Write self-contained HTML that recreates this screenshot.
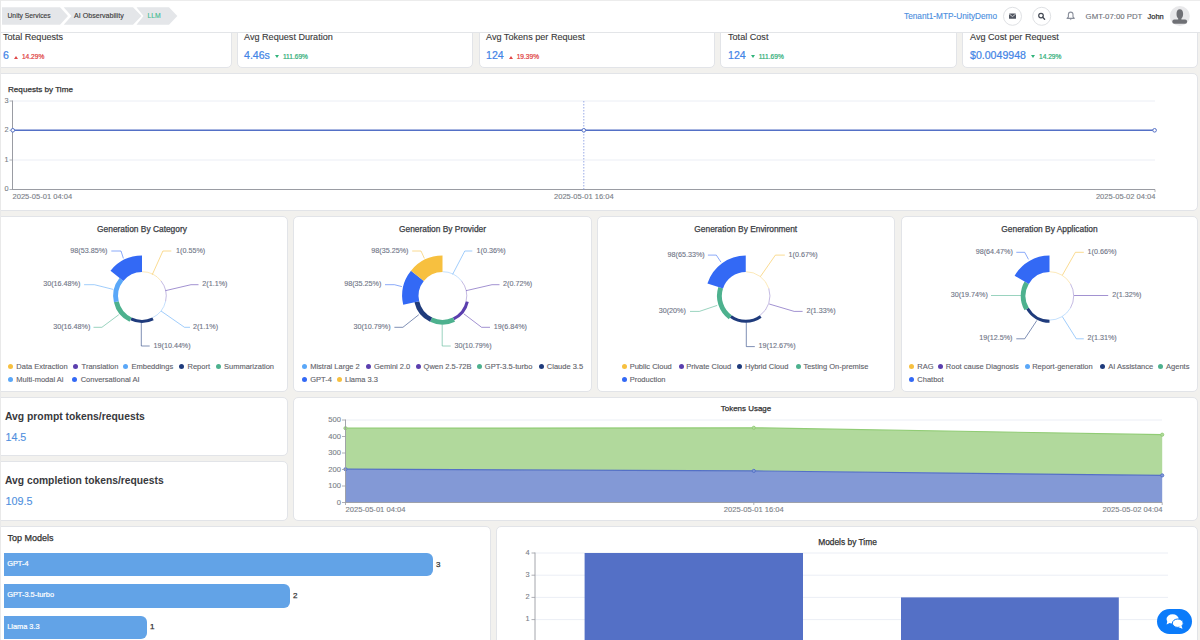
<!DOCTYPE html>
<html><head><meta charset="utf-8"><style>
html,body{margin:0;padding:0;}
body{width:1200px;height:640px;overflow:hidden;position:relative;background:#f2f1ee;font-family:"Liberation Sans", sans-serif;}
.card{position:absolute;box-sizing:border-box;background:#fff;border:1px solid #e2e4e8;}
.t{position:absolute;white-space:nowrap;-webkit-text-stroke-width:0.12px;}
svg{position:absolute;left:0;top:0;overflow:visible}
</style></head><body>
<div class="card" style="left:-4px;top:20px;width:236px;height:48px;border-radius:5px"></div><div class="card" style="left:237px;top:20px;width:236px;height:48px;border-radius:5px"></div><div class="card" style="left:479px;top:20px;width:236px;height:48px;border-radius:5px"></div><div class="card" style="left:720px;top:20px;width:237px;height:48px;border-radius:5px"></div><div class="card" style="left:962px;top:20px;width:236px;height:48px;border-radius:5px"></div><div class="card" style="left:-4px;top:73px;width:1202px;height:138px;border-radius:5px"></div><div class="card" style="left:-4px;top:216px;width:292px;height:176px;border-radius:5px"></div><div class="card" style="left:293px;top:216px;width:299px;height:176px;border-radius:5px"></div><div class="card" style="left:597px;top:216px;width:298px;height:176px;border-radius:5px"></div><div class="card" style="left:901px;top:216px;width:297px;height:176px;border-radius:5px"></div><div class="card" style="left:-4px;top:397px;width:292px;height:59px;border-radius:5px"></div><div class="card" style="left:-4px;top:461px;width:292px;height:60px;border-radius:5px"></div><div class="card" style="left:293px;top:397px;width:905px;height:124px;border-radius:5px"></div><div class="card" style="left:-4px;top:526px;width:495px;height:174px;border-radius:5px"></div><div class="card" style="left:496px;top:526px;width:702px;height:174px;border-radius:5px"></div><div class="t" style="left:3.00px;top:31.94px;font-size:9.1px;line-height:10.92px;color:#3a3a3a;font-weight:400;">Total Requests</div><div class="t" style="left:3px;top:49px;height:13px;display:flex;align-items:center;white-space:nowrap"><span style="font-size:10.6px;color:#4284e6;line-height:13px;-webkit-text-stroke:0.2px #4284e6">6</span><span style="display:inline-block;margin-left:5px;width:0;height:0;border-left:2.4px solid transparent;border-right:2.4px solid transparent;border-bottom:3px solid #e04848;margin-top:3px;"></span><span style="font-size:6.6px;margin-left:4px;line-height:13px;margin-top:1px;color:#e04040;-webkit-text-stroke:0.2px #e04040">14.29%</span></div><div class="t" style="left:244.00px;top:31.94px;font-size:9.1px;line-height:10.92px;color:#3a3a3a;font-weight:400;">Avg Request Duration</div><div class="t" style="left:244px;top:49px;height:13px;display:flex;align-items:center;white-space:nowrap"><span style="font-size:10.6px;color:#4284e6;line-height:13px;-webkit-text-stroke:0.2px #4284e6">4.46s</span><span style="display:inline-block;margin-left:5px;width:0;height:0;border-left:2.4px solid transparent;border-right:2.4px solid transparent;border-top:3px solid #30b47a;margin-top:1px;"></span><span style="font-size:6.6px;margin-left:4px;line-height:13px;margin-top:1px;color:#2fae78;-webkit-text-stroke:0.2px #2fae78">111.69%</span></div><div class="t" style="left:486.00px;top:31.94px;font-size:9.1px;line-height:10.92px;color:#3a3a3a;font-weight:400;">Avg Tokens per Request</div><div class="t" style="left:486px;top:49px;height:13px;display:flex;align-items:center;white-space:nowrap"><span style="font-size:10.6px;color:#4284e6;line-height:13px;-webkit-text-stroke:0.2px #4284e6">124</span><span style="display:inline-block;margin-left:5px;width:0;height:0;border-left:2.4px solid transparent;border-right:2.4px solid transparent;border-bottom:3px solid #e04848;margin-top:3px;"></span><span style="font-size:6.6px;margin-left:4px;line-height:13px;margin-top:1px;color:#e04040;-webkit-text-stroke:0.2px #e04040">19.39%</span></div><div class="t" style="left:728.00px;top:31.94px;font-size:9.1px;line-height:10.92px;color:#3a3a3a;font-weight:400;">Total Cost</div><div class="t" style="left:728px;top:49px;height:13px;display:flex;align-items:center;white-space:nowrap"><span style="font-size:10.6px;color:#4284e6;line-height:13px;-webkit-text-stroke:0.2px #4284e6">124</span><span style="display:inline-block;margin-left:5px;width:0;height:0;border-left:2.4px solid transparent;border-right:2.4px solid transparent;border-top:3px solid #30b47a;margin-top:1px;"></span><span style="font-size:6.6px;margin-left:4px;line-height:13px;margin-top:1px;color:#2fae78;-webkit-text-stroke:0.2px #2fae78">111.69%</span></div><div class="t" style="left:970.00px;top:31.94px;font-size:9.1px;line-height:10.92px;color:#3a3a3a;font-weight:400;">Avg Cost per Request</div><div class="t" style="left:970px;top:49px;height:13px;display:flex;align-items:center;white-space:nowrap"><span style="font-size:10.6px;color:#4284e6;line-height:13px;-webkit-text-stroke:0.2px #4284e6">$0.0049948</span><span style="display:inline-block;margin-left:5px;width:0;height:0;border-left:2.4px solid transparent;border-right:2.4px solid transparent;border-top:3px solid #30b47a;margin-top:1px;"></span><span style="font-size:6.6px;margin-left:4px;line-height:13px;margin-top:1px;color:#2fae78;-webkit-text-stroke:0.2px #2fae78">14.29%</span></div><div style="position:absolute;left:0;top:0;width:1200px;height:33px;background:#fff;box-sizing:border-box;border-top:1px solid #ececec;border-bottom:1px solid #e3e5e8"></div><svg width="1200" height="33" style="position:absolute;left:0;top:0"><polygon points="2,7.2 60,7.2 68,16 60,24.8 2,24.8" fill="#e4e6e9"/><polygon points="63.7,7.2 133,7.2 141.5,16 133,24.8 63.7,24.8 71.5,16" fill="#e4e6e9"/><polygon points="136.5,7.2 169,7.2 177.3,16 169,24.8 136.5,24.8 143.5,16" fill="#e4e6e9"/><circle cx="1012.5" cy="16.3" r="9" fill="#fff" stroke="#dfe1e4" stroke-width="1"/><circle cx="1041.7" cy="16.3" r="9" fill="#fff" stroke="#dfe1e4" stroke-width="1"/><rect x="1009" y="13.6" width="7" height="5.2" rx="0.6" fill="#505560"/><polyline points="1009.2,14 1012.5,16.6 1015.8,14" fill="none" stroke="#fff" stroke-width="0.7"/><circle cx="1041" cy="15.6" r="2.3" fill="none" stroke="#454a55" stroke-width="1.2"/><line x1="1042.7" y1="17.3" x2="1044.6" y2="19.2" stroke="#454a55" stroke-width="1.4" stroke-linecap="round"/><path d="M1067.1,18.4 L1068.4,16.9 L1068.4,14.6 Q1068.4,12.1 1070.7,12.1 Q1073,12.1 1073,14.6 L1073,16.9 L1074.3,18.4 Z" fill="none" stroke="#8b909c" stroke-width="1.1" stroke-linejoin="round"/><path d="M1069.7,19.2 L1071.7,19.2 L1070.7,20.3 Z" fill="#8b909c"/><circle cx="1179.8" cy="16" r="10" fill="#e8e8ea"/><ellipse cx="1179.8" cy="13.9" rx="3.3" ry="4.7" fill="#6f7075"/><rect x="1178.2" y="17" width="3.2" height="3" fill="#6f7075"/><rect x="1172.3" y="19.4" width="14.8" height="4.4" rx="2" fill="#6f7075"/></svg><div class="t" style="left:7.50px;top:12.25px;font-size:6.75px;line-height:8.10px;color:#3b3b3b;font-weight:400;">Unity Services</div><div class="t" style="left:74.00px;top:12.04px;font-size:7.1px;line-height:8.52px;color:#3b3b3b;font-weight:400;">AI Observability</div><div class="t" style="left:147.50px;top:12.22px;font-size:6.8px;line-height:8.16px;color:#40bb90;font-weight:400;">LLM</div><div class="t" style="left:904.00px;top:11.55px;font-size:8.25px;line-height:9.90px;color:#4a8ee0;font-weight:400;">Tenant1-MTP-UnityDemo</div><div class="t" style="left:1085.60px;top:11.82px;font-size:7.8px;line-height:9.36px;color:#6e7179;font-weight:400;">GMT-07:00 PDT</div><div class="t" style="left:1147.50px;top:12.00px;font-size:7.5px;line-height:9.00px;color:#333;font-weight:400;-webkit-text-stroke:0.25px #333;">John</div><div class="t" style="left:8.00px;top:84.63px;font-size:8.12px;line-height:9.74px;color:#333;font-weight:400;-webkit-text-stroke:0.25px #333;">Requests by Time</div><svg width="1200" height="640"><line x1="12.5" y1="101" x2="1155" y2="101" stroke="#e6eaf2" stroke-width="0.8"/><line x1="9.5" y1="101" x2="12.5" y2="101" stroke="#9a9ca3" stroke-width="0.8"/><line x1="12.5" y1="130.3" x2="1155" y2="130.3" stroke="#e6eaf2" stroke-width="0.8"/><line x1="9.5" y1="130.3" x2="12.5" y2="130.3" stroke="#9a9ca3" stroke-width="0.8"/><line x1="12.5" y1="160" x2="1155" y2="160" stroke="#e6eaf2" stroke-width="0.8"/><line x1="9.5" y1="160" x2="12.5" y2="160" stroke="#9a9ca3" stroke-width="0.8"/><line x1="9.5" y1="189.5" x2="12.5" y2="189.5" stroke="#9a9ca3" stroke-width="0.8"/><line x1="12.5" y1="100.5" x2="12.5" y2="190" stroke="#9a9ca3" stroke-width="1"/><line x1="12.5" y1="189.5" x2="1155" y2="189.5" stroke="#9a9ca3" stroke-width="1"/><line x1="1155" y1="189.5" x2="1155" y2="192" stroke="#9a9ca3" stroke-width="0.8"/><line x1="583.8" y1="101" x2="583.8" y2="190" stroke="#7f95e0" stroke-width="0.8" stroke-dasharray="1.5,1.5"/><line x1="12.5" y1="130.3" x2="1155" y2="130.3" stroke="#5470c6" stroke-width="1.4"/><circle cx="12.8" cy="130.3" r="1.8" fill="#fff" stroke="#5470c6" stroke-width="1"/><circle cx="583.8" cy="130.3" r="1.8" fill="#fff" stroke="#5470c6" stroke-width="1"/><circle cx="1154.6" cy="130.3" r="1.8" fill="#fff" stroke="#5470c6" stroke-width="1"/></svg><div class="t" style="right:1191.50px;top:96.62px;font-size:7.3px;line-height:8.76px;color:#7b7f88;font-weight:400;">3</div><div class="t" style="right:1191.50px;top:125.92px;font-size:7.3px;line-height:8.76px;color:#7b7f88;font-weight:400;">2</div><div class="t" style="right:1191.50px;top:155.62px;font-size:7.3px;line-height:8.76px;color:#7b7f88;font-weight:400;">1</div><div class="t" style="right:1191.50px;top:185.12px;font-size:7.3px;line-height:8.76px;color:#7b7f88;font-weight:400;">0</div><div class="t" style="left:12.50px;top:192.47px;font-size:7.55px;line-height:9.06px;color:#7b7f88;font-weight:400;">2025-05-01 04:04</div><div class="t" style="left:283.80px;width:600px;text-align:center;top:192.47px;font-size:7.55px;line-height:9.06px;color:#7b7f88;font-weight:400;">2025-05-01 16:04</div><div class="t" style="right:44.50px;top:192.47px;font-size:7.55px;line-height:9.06px;color:#7b7f88;font-weight:400;">2025-05-02 04:04</div><svg width="1200" height="640"><path d="M142.00,271.70 A24.2,24.2 0 0 1 160.92,280.81" fill="none" stroke="#f7c03f" stroke-width="0.8" opacity="0.45"/><path d="M160.92,280.81 A24.2,24.2 0 0 1 165.59,301.29" fill="none" stroke="#5b3fae" stroke-width="0.8" opacity="0.45"/><path d="M165.59,301.29 A24.2,24.2 0 0 1 152.50,317.70" fill="none" stroke="#5aa7f8" stroke-width="0.8" opacity="0.45"/><path d="M153.69,320.18 A26.943298969072163,26.943298969072163 0 0 1 130.31,320.18 L131.63,317.43 A23.9,23.9 0 0 0 152.37,317.43 Z" fill="#1f3b7c"/><path d="M129.50,321.85 A28.803092783505154,28.803092783505154 0 0 1 113.92,302.31 L118.70,301.22 A23.9,23.9 0 0 0 131.63,317.43 Z" fill="#4db18e"/><path d="M113.92,302.31 A28.803092783505154,28.803092783505154 0 0 1 119.48,277.94 L123.31,281.00 A23.9,23.9 0 0 0 118.70,301.22 Z" fill="#5aa7f8"/><path d="M110.49,270.77 A40.3,40.3 0 0 1 142.00,255.60 L142.00,272.00 A23.9,23.9 0 0 0 123.31,281.00 Z" fill="#3369f5"/><polyline points="152.2,274.8 162.9,251.0 171.3,251.0" fill="none" stroke="#f7c03f" stroke-width="0.95" opacity="0.6"/><polyline points="165.3,290.7 191.0,284.7 198.5,284.7" fill="none" stroke="#5b3fae" stroke-width="0.95" opacity="0.6"/><polyline points="161.0,311.0 184.5,327.3 190.0,327.3" fill="none" stroke="#5aa7f8" stroke-width="0.95" opacity="0.6"/><polyline points="141.3,321.7 141.3,346.0 149.7,346.0" fill="none" stroke="#1f3b7c" stroke-width="0.95" opacity="0.6"/><polyline points="118.8,314.7 101.9,327.3 93.5,327.3" fill="none" stroke="#4db18e" stroke-width="0.95" opacity="0.6"/><polyline points="113.2,289.4 94.4,284.7 84.1,284.7" fill="none" stroke="#5aa7f8" stroke-width="0.95" opacity="0.6"/><polyline points="123.4,258.4 121.0,251.0 111.3,251.0" fill="none" stroke="#3369f5" stroke-width="0.95" opacity="0.6"/></svg><div class="t" style="left:-158.00px;width:600px;text-align:center;top:223.57px;font-size:8.38px;line-height:10.06px;color:#3a3d44;font-weight:400;-webkit-text-stroke:0.25px #3a3d44;">Generation By Category</div><div class="t" style="left:176.00px;top:246.68px;font-size:7.2px;line-height:8.64px;color:#6f7587;font-weight:400;">1(0.55%)</div><div class="t" style="left:202.30px;top:280.38px;font-size:7.2px;line-height:8.64px;color:#6f7587;font-weight:400;">2(1.1%)</div><div class="t" style="left:192.90px;top:322.98px;font-size:7.2px;line-height:8.64px;color:#6f7587;font-weight:400;">2(1.1%)</div><div class="t" style="left:153.50px;top:341.68px;font-size:7.2px;line-height:8.64px;color:#6f7587;font-weight:400;">19(10.44%)</div><div class="t" style="right:1109.70px;top:322.98px;font-size:7.2px;line-height:8.64px;color:#6f7587;font-weight:400;">30(16.48%)</div><div class="t" style="right:1119.70px;top:280.38px;font-size:7.2px;line-height:8.64px;color:#6f7587;font-weight:400;">30(16.48%)</div><div class="t" style="right:1092.50px;top:246.68px;font-size:7.2px;line-height:8.64px;color:#6f7587;font-weight:400;">98(53.85%)</div><div style="position:absolute;left:7.90px;top:364.40px;width:5px;height:5px;border-radius:50%;background:#f7c03f"></div><div class="t" style="left:16.30px;top:362.20px;font-size:7.5px;line-height:9.00px;color:#5f636b;font-weight:400;">Data Extraction</div><div style="position:absolute;left:73.20px;top:364.40px;width:5px;height:5px;border-radius:50%;background:#5b3fae"></div><div class="t" style="left:81.60px;top:362.20px;font-size:7.5px;line-height:9.00px;color:#5f636b;font-weight:400;">Translation</div><div style="position:absolute;left:123.00px;top:364.40px;width:5px;height:5px;border-radius:50%;background:#5aa7f8"></div><div class="t" style="left:131.50px;top:362.20px;font-size:7.5px;line-height:9.00px;color:#5f636b;font-weight:400;">Embeddings</div><div style="position:absolute;left:179.10px;top:364.40px;width:5px;height:5px;border-radius:50%;background:#1f3b7c"></div><div class="t" style="left:187.50px;top:362.20px;font-size:7.5px;line-height:9.00px;color:#5f636b;font-weight:400;">Report</div><div style="position:absolute;left:215.50px;top:364.40px;width:5px;height:5px;border-radius:50%;background:#4db18e"></div><div class="t" style="left:224.00px;top:362.20px;font-size:7.5px;line-height:9.00px;color:#5f636b;font-weight:400;">Summarization</div><div style="position:absolute;left:7.90px;top:377.40px;width:5px;height:5px;border-radius:50%;background:#5aa7f8"></div><div class="t" style="left:16.30px;top:375.20px;font-size:7.5px;line-height:9.00px;color:#5f636b;font-weight:400;">Multi-modal Ai</div><div style="position:absolute;left:72.30px;top:377.40px;width:5px;height:5px;border-radius:50%;background:#3369f5"></div><div class="t" style="left:80.70px;top:375.20px;font-size:7.5px;line-height:9.00px;color:#5f636b;font-weight:400;">Conversational AI</div><svg width="1200" height="640"><path d="M442.50,271.70 A24.2,24.2 0 0 1 461.42,280.81" fill="none" stroke="#5aa7f8" stroke-width="0.8" opacity="0.45"/><path d="M461.42,280.81 A24.2,24.2 0 0 1 466.09,301.29" fill="none" stroke="#5b3fae" stroke-width="0.8" opacity="0.45"/><path d="M468.77,301.90 A26.943298969072163,26.943298969072163 0 0 1 454.19,320.18 L452.87,317.43 A23.9,23.9 0 0 0 465.80,301.22 Z" fill="#5b3fae"/><path d="M455.00,321.85 A28.803092783505154,28.803092783505154 0 0 1 430.00,321.85 L432.13,317.43 A23.9,23.9 0 0 0 452.87,317.43 Z" fill="#4db18e"/><path d="M430.00,321.85 A28.803092783505154,28.803092783505154 0 0 1 414.42,302.31 L419.20,301.22 A23.9,23.9 0 0 0 432.13,317.43 Z" fill="#1f3b7c"/><path d="M403.21,304.87 A40.3,40.3 0 0 1 410.99,270.77 L423.81,281.00 A23.9,23.9 0 0 0 419.20,301.22 Z" fill="#3369f5"/><path d="M410.99,270.77 A40.3,40.3 0 0 1 442.50,255.60 L442.50,272.00 A23.9,23.9 0 0 0 423.81,281.00 Z" fill="#f7c03f"/><polyline points="452.6,274.4 464.8,251.0 472.3,251.0" fill="none" stroke="#5aa7f8" stroke-width="0.95" opacity="0.6"/><polyline points="466.0,290.7 492.0,284.7 499.5,284.7" fill="none" stroke="#5b3fae" stroke-width="0.95" opacity="0.6"/><polyline points="463.8,313.8 481.6,327.3 490.0,327.3" fill="none" stroke="#5b3fae" stroke-width="0.95" opacity="0.6"/><polyline points="442.2,324.7 442.2,346.0 450.7,346.0" fill="none" stroke="#4db18e" stroke-width="0.95" opacity="0.6"/><polyline points="418.8,314.7 402.9,327.3 394.4,327.3" fill="none" stroke="#1f3b7c" stroke-width="0.95" opacity="0.6"/><polyline points="401.9,286.6 394.4,284.7 385.0,284.7" fill="none" stroke="#3369f5" stroke-width="0.95" opacity="0.6"/><polyline points="424.4,258.4 421.0,251.0 412.2,251.0" fill="none" stroke="#f7c03f" stroke-width="0.95" opacity="0.6"/></svg><div class="t" style="left:142.50px;width:600px;text-align:center;top:223.57px;font-size:8.38px;line-height:10.06px;color:#3a3d44;font-weight:400;-webkit-text-stroke:0.25px #3a3d44;">Generation By Provider</div><div class="t" style="left:476.60px;top:246.68px;font-size:7.2px;line-height:8.64px;color:#6f7587;font-weight:400;">1(0.36%)</div><div class="t" style="left:503.00px;top:280.38px;font-size:7.2px;line-height:8.64px;color:#6f7587;font-weight:400;">2(0.72%)</div><div class="t" style="left:493.80px;top:322.98px;font-size:7.2px;line-height:8.64px;color:#6f7587;font-weight:400;">19(6.84%)</div><div class="t" style="left:454.40px;top:341.68px;font-size:7.2px;line-height:8.64px;color:#6f7587;font-weight:400;">30(10.79%)</div><div class="t" style="right:809.40px;top:322.98px;font-size:7.2px;line-height:8.64px;color:#6f7587;font-weight:400;">30(10.79%)</div><div class="t" style="right:818.70px;top:280.38px;font-size:7.2px;line-height:8.64px;color:#6f7587;font-weight:400;">98(35.25%)</div><div class="t" style="right:791.50px;top:246.68px;font-size:7.2px;line-height:8.64px;color:#6f7587;font-weight:400;">98(35.25%)</div><div style="position:absolute;left:302.30px;top:364.40px;width:5px;height:5px;border-radius:50%;background:#5aa7f8"></div><div class="t" style="left:310.20px;top:362.20px;font-size:7.5px;line-height:9.00px;color:#5f636b;font-weight:400;">Mistral Large 2</div><div style="position:absolute;left:366.20px;top:364.40px;width:5px;height:5px;border-radius:50%;background:#5b3fae"></div><div class="t" style="left:374.00px;top:362.20px;font-size:7.5px;line-height:9.00px;color:#5f636b;font-weight:400;">Gemini 2.0</div><div style="position:absolute;left:415.80px;top:364.40px;width:5px;height:5px;border-radius:50%;background:#5b3fae"></div><div class="t" style="left:423.60px;top:362.20px;font-size:7.5px;line-height:9.00px;color:#5f636b;font-weight:400;">Qwen 2.5-72B</div><div style="position:absolute;left:476.90px;top:364.40px;width:5px;height:5px;border-radius:50%;background:#4db18e"></div><div class="t" style="left:484.80px;top:362.20px;font-size:7.5px;line-height:9.00px;color:#5f636b;font-weight:400;">GPT-3.5-turbo</div><div style="position:absolute;left:539.00px;top:364.40px;width:5px;height:5px;border-radius:50%;background:#1f3b7c"></div><div class="t" style="left:546.80px;top:362.20px;font-size:7.5px;line-height:9.00px;color:#5f636b;font-weight:400;">Claude 3.5</div><div style="position:absolute;left:302.30px;top:377.40px;width:5px;height:5px;border-radius:50%;background:#3369f5"></div><div class="t" style="left:310.20px;top:375.20px;font-size:7.5px;line-height:9.00px;color:#5f636b;font-weight:400;">GPT-4</div><div style="position:absolute;left:337.10px;top:377.40px;width:5px;height:5px;border-radius:50%;background:#f7c03f"></div><div class="t" style="left:345.00px;top:375.20px;font-size:7.5px;line-height:9.00px;color:#5f636b;font-weight:400;">Llama 3.3</div><svg width="1200" height="640"><path d="M745.75,271.70 A24.2,24.2 0 0 1 768.77,288.42" fill="none" stroke="#f7c03f" stroke-width="0.8" opacity="0.45"/><path d="M768.77,288.42 A24.2,24.2 0 0 1 759.97,315.48" fill="none" stroke="#5b3fae" stroke-width="0.8" opacity="0.45"/><path d="M761.59,317.70 A26.943298969072163,26.943298969072163 0 0 1 729.91,317.70 L731.70,315.24 A23.9,23.9 0 0 0 759.80,315.24 Z" fill="#1f3b7c"/><path d="M728.82,319.20 A28.803092783505154,28.803092783505154 0 0 1 718.36,287.00 L723.02,288.51 A23.9,23.9 0 0 0 731.70,315.24 Z" fill="#4db18e"/><path d="M707.42,283.45 A40.3,40.3 0 0 1 745.75,255.60 L745.75,272.00 A23.9,23.9 0 0 0 723.02,288.51 Z" fill="#3369f5"/><polyline points="760.4,276.6 775.4,255.1 784.8,255.1" fill="none" stroke="#f7c03f" stroke-width="0.95" opacity="0.6"/><polyline points="769.2,304.0 794.2,311.4 802.6,311.4" fill="none" stroke="#5b3fae" stroke-width="0.95" opacity="0.6"/><polyline points="746.3,322.2 746.3,346.6 754.8,346.6" fill="none" stroke="#1f3b7c" stroke-width="0.95" opacity="0.6"/><polyline points="717.2,305.4 699.4,311.4 690.0,311.4" fill="none" stroke="#4db18e" stroke-width="0.95" opacity="0.6"/><polyline points="721.0,262.2 716.3,255.1 707.9,255.1" fill="none" stroke="#3369f5" stroke-width="0.95" opacity="0.6"/></svg><div class="t" style="left:445.75px;width:600px;text-align:center;top:223.57px;font-size:8.38px;line-height:10.06px;color:#3a3d44;font-weight:400;-webkit-text-stroke:0.25px #3a3d44;">Generation By Environment</div><div class="t" style="left:788.50px;top:250.78px;font-size:7.2px;line-height:8.64px;color:#6f7587;font-weight:400;">1(0.67%)</div><div class="t" style="left:806.40px;top:307.08px;font-size:7.2px;line-height:8.64px;color:#6f7587;font-weight:400;">2(1.33%)</div><div class="t" style="left:758.50px;top:342.28px;font-size:7.2px;line-height:8.64px;color:#6f7587;font-weight:400;">19(12.67%)</div><div class="t" style="right:514.10px;top:307.08px;font-size:7.2px;line-height:8.64px;color:#6f7587;font-weight:400;">30(20%)</div><div class="t" style="right:495.30px;top:250.78px;font-size:7.2px;line-height:8.64px;color:#6f7587;font-weight:400;">98(65.33%)</div><div style="position:absolute;left:622.20px;top:364.40px;width:5px;height:5px;border-radius:50%;background:#f7c03f"></div><div class="t" style="left:629.70px;top:362.20px;font-size:7.5px;line-height:9.00px;color:#5f636b;font-weight:400;">Public Cloud</div><div style="position:absolute;left:678.60px;top:364.40px;width:5px;height:5px;border-radius:50%;background:#5b3fae"></div><div class="t" style="left:686.20px;top:362.20px;font-size:7.5px;line-height:9.00px;color:#5f636b;font-weight:400;">Private Cloud</div><div style="position:absolute;left:737.40px;top:364.40px;width:5px;height:5px;border-radius:50%;background:#1f3b7c"></div><div class="t" style="left:745.00px;top:362.20px;font-size:7.5px;line-height:9.00px;color:#5f636b;font-weight:400;">Hybrid Cloud</div><div style="position:absolute;left:795.90px;top:364.40px;width:5px;height:5px;border-radius:50%;background:#4db18e"></div><div class="t" style="left:803.40px;top:362.20px;font-size:7.5px;line-height:9.00px;color:#5f636b;font-weight:400;">Testing On-premise</div><div style="position:absolute;left:622.20px;top:377.40px;width:5px;height:5px;border-radius:50%;background:#3369f5"></div><div class="t" style="left:629.70px;top:375.20px;font-size:7.5px;line-height:9.00px;color:#5f636b;font-weight:400;">Production</div><svg width="1200" height="640"><path d="M1049.50,271.70 A24.2,24.2 0 0 1 1070.46,283.80" fill="none" stroke="#f7c03f" stroke-width="0.8" opacity="0.45"/><path d="M1070.46,283.80 A24.2,24.2 0 0 1 1070.46,308.00" fill="none" stroke="#5b3fae" stroke-width="0.8" opacity="0.45"/><path d="M1070.46,308.00 A24.2,24.2 0 0 1 1049.50,320.10" fill="none" stroke="#5aa7f8" stroke-width="0.8" opacity="0.45"/><path d="M1049.50,322.84 A26.943298969072163,26.943298969072163 0 0 1 1026.17,309.37 L1028.80,307.85 A23.9,23.9 0 0 0 1049.50,319.80 Z" fill="#1f3b7c"/><path d="M1024.56,310.30 A28.803092783505154,28.803092783505154 0 0 1 1024.56,281.50 L1028.80,283.95 A23.9,23.9 0 0 0 1028.80,307.85 Z" fill="#4db18e"/><path d="M1014.60,275.75 A40.3,40.3 0 0 1 1049.50,255.60 L1049.50,272.00 A23.9,23.9 0 0 0 1028.80,283.95 Z" fill="#3369f5"/><polyline points="1062.3,275.3 1075.4,252.3 1083.8,252.3" fill="none" stroke="#f7c03f" stroke-width="0.95" opacity="0.6"/><polyline points="1074.1,295.5 1108.2,295.5" fill="none" stroke="#5b3fae" stroke-width="0.95" opacity="0.6"/><polyline points="1062.3,316.6 1076.3,338.8 1083.8,338.8" fill="none" stroke="#5aa7f8" stroke-width="0.95" opacity="0.6"/><polyline points="1036.9,320.4 1024.7,338.8 1016.3,338.8" fill="none" stroke="#1f3b7c" stroke-width="0.95" opacity="0.6"/><polyline points="1021.9,295.5 991.0,295.5" fill="none" stroke="#4db18e" stroke-width="0.95" opacity="0.6"/><polyline points="1028.5,259.4 1024.7,252.3 1016.3,252.3" fill="none" stroke="#3369f5" stroke-width="0.95" opacity="0.6"/></svg><div class="t" style="left:749.50px;width:600px;text-align:center;top:223.57px;font-size:8.38px;line-height:10.06px;color:#3a3d44;font-weight:400;-webkit-text-stroke:0.25px #3a3d44;">Generation By Application</div><div class="t" style="left:1087.60px;top:247.98px;font-size:7.2px;line-height:8.64px;color:#6f7587;font-weight:400;">1(0.66%)</div><div class="t" style="left:1112.30px;top:291.18px;font-size:7.2px;line-height:8.64px;color:#6f7587;font-weight:400;">2(1.32%)</div><div class="t" style="left:1087.60px;top:334.48px;font-size:7.2px;line-height:8.64px;color:#6f7587;font-weight:400;">2(1.31%)</div><div class="t" style="right:187.50px;top:334.48px;font-size:7.2px;line-height:8.64px;color:#6f7587;font-weight:400;">19(12.5%)</div><div class="t" style="right:212.20px;top:291.18px;font-size:7.2px;line-height:8.64px;color:#6f7587;font-weight:400;">30(19.74%)</div><div class="t" style="right:187.10px;top:247.98px;font-size:7.2px;line-height:8.64px;color:#6f7587;font-weight:400;">98(64.47%)</div><div style="position:absolute;left:909.40px;top:364.40px;width:5px;height:5px;border-radius:50%;background:#f7c03f"></div><div class="t" style="left:917.30px;top:362.20px;font-size:7.5px;line-height:9.00px;color:#5f636b;font-weight:400;">RAG</div><div style="position:absolute;left:937.90px;top:364.40px;width:5px;height:5px;border-radius:50%;background:#5b3fae"></div><div class="t" style="left:945.80px;top:362.20px;font-size:7.5px;line-height:9.00px;color:#5f636b;font-weight:400;">Root cause Diagnosis</div><div style="position:absolute;left:1024.60px;top:364.40px;width:5px;height:5px;border-radius:50%;background:#5aa7f8"></div><div class="t" style="left:1032.20px;top:362.20px;font-size:7.5px;line-height:9.00px;color:#5f636b;font-weight:400;">Report-generation</div><div style="position:absolute;left:1100.30px;top:364.40px;width:5px;height:5px;border-radius:50%;background:#1f3b7c"></div><div class="t" style="left:1108.20px;top:362.20px;font-size:7.5px;line-height:9.00px;color:#5f636b;font-weight:400;">AI Assistance</div><div style="position:absolute;left:1158.20px;top:364.40px;width:5px;height:5px;border-radius:50%;background:#4db18e"></div><div class="t" style="left:1166.10px;top:362.20px;font-size:7.5px;line-height:9.00px;color:#5f636b;font-weight:400;">Agents</div><div style="position:absolute;left:909.40px;top:377.40px;width:5px;height:5px;border-radius:50%;background:#3369f5"></div><div class="t" style="left:917.30px;top:375.20px;font-size:7.5px;line-height:9.00px;color:#5f636b;font-weight:400;">Chatbot</div><div class="t" style="left:5.00px;top:411.09px;font-size:10.35px;line-height:12.42px;color:#38393d;font-weight:700;-webkit-text-stroke-width:0;">Avg prompt tokens/requests</div><div class="t" style="left:5.50px;top:430.58px;font-size:10.7px;line-height:12.84px;color:#4f8fde;font-weight:400;">14.5</div><div class="t" style="left:5.00px;top:475.42px;font-size:10.3px;line-height:12.36px;color:#38393d;font-weight:700;-webkit-text-stroke-width:0;">Avg completion tokens/requests</div><div class="t" style="left:5.50px;top:494.52px;font-size:10.8px;line-height:12.96px;color:#4f8fde;font-weight:400;">109.5</div><div class="t" style="left:446.00px;width:600px;text-align:center;top:404.23px;font-size:7.95px;line-height:9.54px;color:#333;font-weight:400;-webkit-text-stroke:0.25px #333;">Tokens Usage</div><svg width="1200" height="640"><line x1="345.5" y1="420" x2="1162" y2="420" stroke="#e6eaf2" stroke-width="0.8"/><polygon points="345.5,428.2 753.8,427.8 1162.2,434.7 1162.2,475.4 753.8,470.9 345.5,469.2" fill="#b1d99c"/><polygon points="345.5,469.2 753.8,470.9 1162.2,475.4 1162.2,502.5 345.5,502.5" fill="#8399d6"/><polyline points="345.5,428.2 753.8,427.8 1162.2,434.7" fill="none" stroke="#91cc75" stroke-width="1.2"/><polyline points="345.5,469.2 753.8,470.9 1162.2,475.4" fill="none" stroke="#5470c6" stroke-width="1.2"/><circle cx="345.5" cy="428.2" r="1.6" fill="#b1d99c" stroke="#91cc75" stroke-width="0.9"/><circle cx="753.8" cy="427.8" r="1.6" fill="#b1d99c" stroke="#91cc75" stroke-width="0.9"/><circle cx="1162.2" cy="434.7" r="1.6" fill="#b1d99c" stroke="#91cc75" stroke-width="0.9"/><circle cx="345.5" cy="469.2" r="1.6" fill="#8399d6" stroke="#5470c6" stroke-width="0.9"/><circle cx="753.8" cy="470.9" r="1.6" fill="#8399d6" stroke="#5470c6" stroke-width="0.9"/><circle cx="1162.2" cy="475.4" r="1.6" fill="#8399d6" stroke="#5470c6" stroke-width="0.9"/><line x1="345.5" y1="419.5" x2="345.5" y2="503" stroke="#9a9ca3" stroke-width="0.9"/><line x1="345.5" y1="502.5" x2="1162.2" y2="502.5" stroke="#9a9ca3" stroke-width="0.9"/><line x1="342" y1="502.5" x2="345.5" y2="502.5" stroke="#9a9ca3" stroke-width="0.8"/><line x1="342" y1="486.0" x2="345.5" y2="486.0" stroke="#9a9ca3" stroke-width="0.8"/><line x1="342" y1="469.5" x2="345.5" y2="469.5" stroke="#9a9ca3" stroke-width="0.8"/><line x1="342" y1="453.0" x2="345.5" y2="453.0" stroke="#9a9ca3" stroke-width="0.8"/><line x1="342" y1="436.5" x2="345.5" y2="436.5" stroke="#9a9ca3" stroke-width="0.8"/><line x1="342" y1="420.0" x2="345.5" y2="420.0" stroke="#9a9ca3" stroke-width="0.8"/><line x1="345.5" y1="502.5" x2="345.5" y2="505" stroke="#9a9ca3" stroke-width="0.8"/><line x1="753.8" y1="502.5" x2="753.8" y2="505" stroke="#9a9ca3" stroke-width="0.8"/><line x1="1162.2" y1="502.5" x2="1162.2" y2="505" stroke="#9a9ca3" stroke-width="0.8"/></svg><div class="t" style="right:859.00px;top:497.94px;font-size:7.6px;line-height:9.12px;color:#7b7f88;font-weight:400;">0</div><div class="t" style="right:859.00px;top:481.44px;font-size:7.6px;line-height:9.12px;color:#7b7f88;font-weight:400;">100</div><div class="t" style="right:859.00px;top:464.94px;font-size:7.6px;line-height:9.12px;color:#7b7f88;font-weight:400;">200</div><div class="t" style="right:859.00px;top:448.44px;font-size:7.6px;line-height:9.12px;color:#7b7f88;font-weight:400;">300</div><div class="t" style="right:859.00px;top:431.94px;font-size:7.6px;line-height:9.12px;color:#7b7f88;font-weight:400;">400</div><div class="t" style="right:859.00px;top:415.44px;font-size:7.6px;line-height:9.12px;color:#7b7f88;font-weight:400;">500</div><div class="t" style="left:345.50px;top:505.24px;font-size:7.6px;line-height:9.12px;color:#7b7f88;font-weight:400;">2025-05-01 04:04</div><div class="t" style="left:453.80px;width:600px;text-align:center;top:505.24px;font-size:7.6px;line-height:9.12px;color:#7b7f88;font-weight:400;">2025-05-01 16:04</div><div class="t" style="right:37.50px;top:505.24px;font-size:7.6px;line-height:9.12px;color:#7b7f88;font-weight:400;">2025-05-02 04:04</div><div class="t" style="left:7.50px;top:533.20px;font-size:9.0px;line-height:10.80px;color:#333;font-weight:400;-webkit-text-stroke:0.25px #333;">Top Models</div><div style="position:absolute;left:4px;top:553px;width:429px;height:23.3px;background:#62a3e7;border-radius:0 6px 6px 0"></div><div class="t" style="left:7.20px;top:560.16px;font-size:7.4px;line-height:8.88px;color:#fff;font-weight:400;-webkit-text-stroke-width:0.2px;">GPT-4</div><div class="t" style="left:436.00px;top:559.60px;font-size:8px;line-height:9.60px;color:#333;font-weight:400;-webkit-text-stroke:0.25px #333;">3</div><div style="position:absolute;left:4px;top:584.3px;width:286px;height:23.3px;background:#62a3e7;border-radius:0 6px 6px 0"></div><div class="t" style="left:7.20px;top:591.46px;font-size:7.4px;line-height:8.88px;color:#fff;font-weight:400;-webkit-text-stroke-width:0.2px;">GPT-3.5-turbo</div><div class="t" style="left:293.00px;top:590.90px;font-size:8px;line-height:9.60px;color:#333;font-weight:400;-webkit-text-stroke:0.25px #333;">2</div><div style="position:absolute;left:4px;top:615.7px;width:143px;height:23.3px;background:#62a3e7;border-radius:0 6px 6px 0"></div><div class="t" style="left:7.20px;top:622.86px;font-size:7.4px;line-height:8.88px;color:#fff;font-weight:400;-webkit-text-stroke-width:0.2px;">Llama 3.3</div><div class="t" style="left:150.00px;top:622.30px;font-size:8px;line-height:9.60px;color:#333;font-weight:400;-webkit-text-stroke:0.25px #333;">1</div><div class="t" style="left:547.50px;width:600px;text-align:center;top:536.96px;font-size:8.4px;line-height:10.08px;color:#333;font-weight:400;-webkit-text-stroke:0.25px #333;">Models by Time</div><svg width="1200" height="640"><line x1="535" y1="641.8" x2="1168" y2="641.8" stroke="#e6eaf2" stroke-width="0.8"/><line x1="531.5" y1="641.8" x2="535" y2="641.8" stroke="#9a9ca3" stroke-width="0.8"/><line x1="535" y1="619.5999999999999" x2="1168" y2="619.5999999999999" stroke="#e6eaf2" stroke-width="0.8"/><line x1="531.5" y1="619.5999999999999" x2="535" y2="619.5999999999999" stroke="#9a9ca3" stroke-width="0.8"/><line x1="535" y1="597.4" x2="1168" y2="597.4" stroke="#e6eaf2" stroke-width="0.8"/><line x1="531.5" y1="597.4" x2="535" y2="597.4" stroke="#9a9ca3" stroke-width="0.8"/><line x1="535" y1="575.1999999999999" x2="1168" y2="575.1999999999999" stroke="#e6eaf2" stroke-width="0.8"/><line x1="531.5" y1="575.1999999999999" x2="535" y2="575.1999999999999" stroke="#9a9ca3" stroke-width="0.8"/><line x1="535" y1="553.0" x2="1168" y2="553.0" stroke="#e6eaf2" stroke-width="0.8"/><line x1="531.5" y1="553.0" x2="535" y2="553.0" stroke="#9a9ca3" stroke-width="0.8"/><rect x="584.6" y="553" width="218.4" height="100" fill="#5470c6"/><rect x="901" y="597.4" width="217.8" height="100" fill="#5470c6"/><line x1="535" y1="552.5" x2="535" y2="640" stroke="#9a9ca3" stroke-width="0.9"/></svg><div class="t" style="right:670.50px;top:615.16px;font-size:7.4px;line-height:8.88px;color:#7b7f88;font-weight:400;">1</div><div class="t" style="right:670.50px;top:592.96px;font-size:7.4px;line-height:8.88px;color:#7b7f88;font-weight:400;">2</div><div class="t" style="right:670.50px;top:570.76px;font-size:7.4px;line-height:8.88px;color:#7b7f88;font-weight:400;">3</div><div class="t" style="right:670.50px;top:548.56px;font-size:7.4px;line-height:8.88px;color:#7b7f88;font-weight:400;">4</div><div style="position:absolute;left:1157.3px;top:609px;width:34.5px;height:24.7px;border-radius:12.4px;background:#0b7bfa"></div><svg width="1200" height="640"><g fill="#fff"><ellipse cx="1172.6" cy="618.9" rx="6.1" ry="4.6"/><path d="M1167.5,620.6 L1166.6,624.6 L1170.6,622.6 Z"/></g><g fill="#fff" stroke="#0b7bfa" stroke-width="1"><ellipse cx="1177.8" cy="623.2" rx="5.4" ry="4.2"/></g><path d="M1181.3,625.5 L1182.6,628.7 L1178.6,627.2 Z" fill="#fff"/></svg><div style="position:absolute;left:0;top:0;width:1px;height:640px;background:#e9e9e9"></div>
</body></html>
